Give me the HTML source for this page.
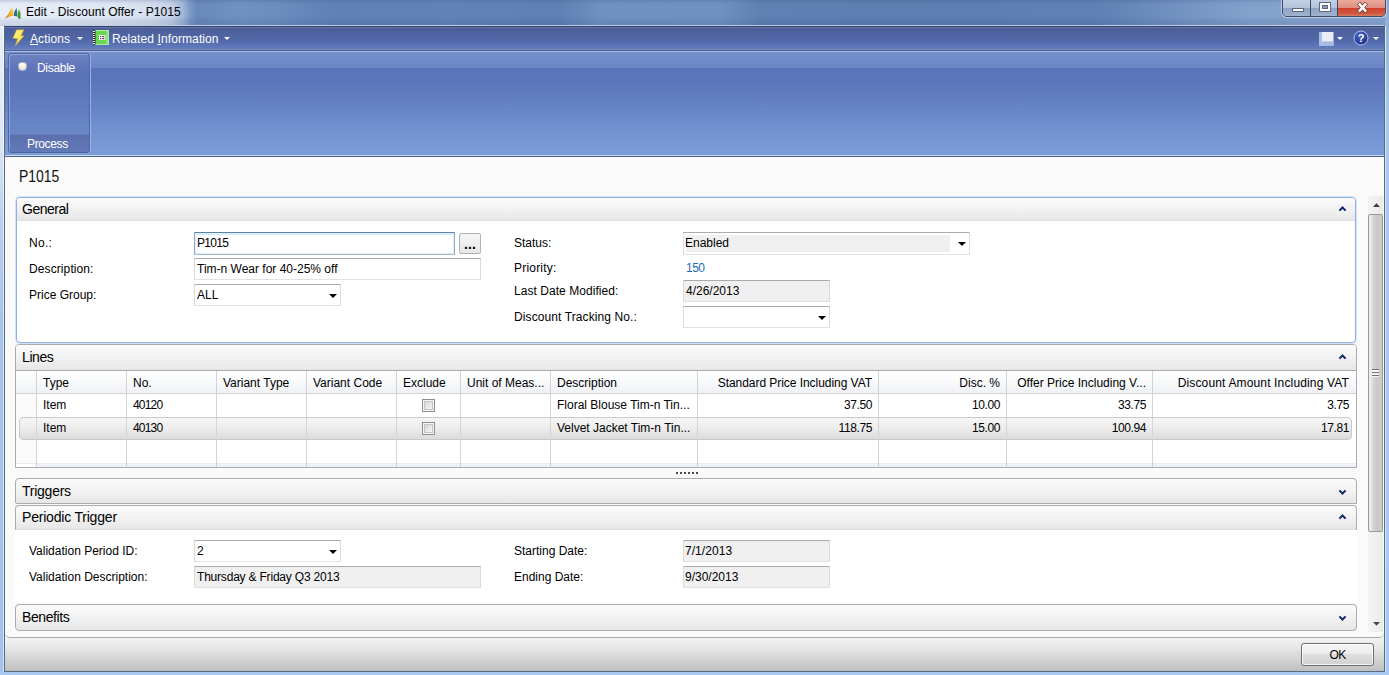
<!DOCTYPE html>
<html>
<head>
<meta charset="utf-8">
<title>Edit - Discount Offer - P1015</title>
<style>
html,body{margin:0;padding:0;}
body{width:1389px;height:675px;overflow:hidden;position:relative;background:#aecbee;font-family:"Liberation Sans",sans-serif;font-size:12px;color:#000;}
div,span{box-sizing:border-box;}
#win div,#win span,#win svg{position:absolute;}
.t{white-space:nowrap;line-height:14px;height:14px;}
/* title bar */
#titlebar{left:0;top:0;width:1389px;height:26px;background:linear-gradient(180deg,rgba(50,70,120,0.20) 0,rgba(50,70,120,0.04) 3px,rgba(50,70,120,0) 6px,rgba(50,70,120,0) 17px,rgba(50,70,130,0.10) 20px,rgba(40,60,110,0.14) 25px),linear-gradient(90deg,#e8eef8 0px,#e1e8f5 100px,#d5dfef 150px,#c3d0e7 172px,#a2b6d8 183px,#7c99c6 190px,#6989ba 197px,#6f91c1 240px,#6c8ebf 270px,#6385b8 310px,#5f81b4 340px,#6183b6 450px,#5e80b3 560px,#6f91c1 600px,#7092c2 720px,#5e80b2 760px,#5c7eb1 950px,#5f81b4 1100px,#7090c0 1170px,#84a1cd 1250px,#8aa7d2 1389px);}
#title{left:26px;top:5px;letter-spacing:0.05px;}
/* frame */
#frameL{left:0;top:26px;width:4px;height:649px;background:linear-gradient(180deg,#e9eff8 0,#dfe8f5 110px,#b7cfef 200px,#a6c4ec 300px,#a4c3ec 649px);}
#frameR{left:1385px;top:0px;width:4px;height:675px;background:linear-gradient(180deg,#8aa7d2 0,#9db8de 40px,#aac8f0 120px,#a9c9f3 675px);}
#frameB{left:0;top:672px;width:1389px;height:3px;background:#a9c9f2;}
#inner{left:4px;top:25px;width:1381px;height:647px;border:1px solid #566a84;border-top-color:#c3d0e6;}
/* menu */
#menubar{left:5px;top:26px;width:1379px;height:25px;background:linear-gradient(180deg,#2f3f6a 0,#2f3f6a 1px,#6877a6 1px,#6877a6 2px,#4a5d99 2px,#5167a5 12px,#4e66a6 13px,#627bbe 22.5px,#7987b6 23px,#7987b6 24px,#4e6094 24px,#4e6094 25px);}
#ribbon{left:5px;top:51px;width:1379px;height:104px;background:linear-gradient(180deg,#a3b8ec 0,#a3b8ec 1px,#7791cd 1px,#6b85c5 17px,#5973b8 17px,#5b76ba 30px,#6380c2 50px,#7090cf 75px,#7a9bd6 100px,#7a9cd5 104px);}
#ribbonline{left:5px;top:155px;width:1379px;height:2px;background:linear-gradient(180deg,#c4dcf8 0,#c4dcf8 1px,#4f6486 1px,#4f6486 2px);}
.w{color:#fff;}
/* content */
#content{left:5px;top:157px;width:1379px;height:481px;background:#fafafa;border-bottom:1px solid #a9a9a9;border-radius:0 0 5px 5px;}
#footerbg{left:5px;top:630px;width:1379px;height:41px;background:linear-gradient(180deg,#f2f2f2 0,#f1f1f1 9px,#e7e7e7 18px,#d2d2d2 30px,#c0c0c0 41px);}
.hdr{background:linear-gradient(180deg,#fbfbfb 0,#f3f3f3 45%,#e7e7e7 100%);}
.ht{font-size:14px;line-height:16px;height:16px;white-space:nowrap;left:6px;}
.inp{background:#fff;border:1px solid #dadada;border-top-color:#ababab;border-bottom-color:#e2e2e2;height:22px;}
.inp.ro{background:#f0f0f0;}
.inp .t{left:2px;top:3px;}
.lbl{white-space:nowrap;line-height:14px;height:14px;}
.arrow{width:0;height:0;border-left:4px solid transparent;border-right:4px solid transparent;border-top:4px solid #000;}
.vl{width:1px;background:#d4d4d4;}
.hl{height:1px;background:#d4d4d4;}
.cb{width:13px;height:13px;border:1px solid #8e8f8f;background:#f4f4f4;}
.cb div{left:1px;top:1px;width:9px;height:9px;border:1px solid #c5c5c5;background:linear-gradient(135deg,#d8d8d8,#f6f6f6);}
</style>
</head>
<body>
<div id="win">
<div id="titlebar"></div>
<span class="t" id="title">Edit - Discount Offer - P1015</span>
<div id="frameL"></div><div id="frameR"></div><div id="frameB"></div>
<div id="inner"></div><div style="left:1385px;top:26px;width:1px;height:646px;background:#d3e7fa"></div><div style="left:3px;top:26px;width:1px;height:646px;background:rgba(255,255,255,0.55)"></div>
<div id="menubar"></div>
<div id="ribbon"></div>
<div id="ribbonline"></div>
<div id="footerbg"></div>
<div id="content"></div>
<!--MENU-->
<svg id="appicon" style="left:0px;top:0px" width="28" height="26" viewBox="0 0 28 26">
<defs><linearGradient id="og" x1="0" y1="1" x2="0.8" y2="0"><stop offset="0" stop-color="#c25f18"/><stop offset="0.45" stop-color="#f1a81f"/><stop offset="1" stop-color="#f8d24a"/></linearGradient>
<linearGradient id="bg2" x1="0" y1="0" x2="0" y2="1"><stop offset="0" stop-color="#3a7fb8"/><stop offset="1" stop-color="#2b6b6a"/></linearGradient>
<linearGradient id="gg" x1="0" y1="0" x2="0" y2="1"><stop offset="0" stop-color="#7ccf5a"/><stop offset="0.4" stop-color="#3f9e2f"/><stop offset="1" stop-color="#2f8a25"/></linearGradient></defs>
<polygon points="4.8,18.4 8,14.5 11.6,7.4 13.2,10.5 13.2,15.6 9,16.8" fill="url(#og)"/>
<polygon points="13.6,15.8 14.4,11.5 16.5,7.7 17.1,11 17.1,16.6" fill="url(#bg2)"/>
<polygon points="17.6,17 17.9,12 19.2,9.2 20.4,12 20.5,18.9 18.5,18.4" fill="url(#gg)"/>
</svg>
<svg id="bolt" style="left:12px;top:29px" width="13" height="18" viewBox="0 0 13 18">
<defs><linearGradient id="yg" x1="0" y1="0" x2="1" y2="1"><stop offset="0" stop-color="#fff59a"/><stop offset="0.5" stop-color="#fbe661"/><stop offset="1" stop-color="#eec63a"/></linearGradient></defs>
<polygon points="4.6,0.8 12,0.8 9,6.4 11.9,6.9 3.2,17 5.6,9.8 0.9,9.3" fill="url(#yg)" stroke="#c9a228" stroke-width="0.5"/>
</svg>
<span class="t w" style="left:30px;top:32px;letter-spacing:0.1px"><u>A</u>ctions</span>
<div class="arrow" style="left:77px;top:37px;border-left-width:3.5px;border-right-width:3.5px;border-top:3.5px solid #fff;"></div>
<svg id="relicon" style="left:92px;top:29px" width="18" height="17" viewBox="0 0 18 17">
<rect x="3.5" y="1.5" width="13" height="14" fill="#68d650" stroke="#aeeaa4" stroke-width="1"/>
<rect x="14" y="2" width="2" height="13" fill="#8fe47c"/>
<rect x="1" y="1.5" width="2.6" height="14" fill="#1c241c"/>
<rect x="1" y="2" width="1.8" height="1" fill="#fff"/><rect x="1" y="4" width="1.8" height="1" fill="#fff"/><rect x="1" y="6" width="1.8" height="1" fill="#fff"/><rect x="1" y="8" width="1.8" height="1" fill="#fff"/><rect x="1" y="10" width="1.8" height="1" fill="#fff"/><rect x="1" y="12" width="1.8" height="1" fill="#fff"/><rect x="1" y="14" width="1.8" height="1" fill="#fff"/>
<rect x="7" y="6" width="6.4" height="5" fill="#fff"/>
<rect x="8" y="7" width="1.2" height="1.2" fill="#5a3a6a"/><rect x="10.2" y="7" width="2.2" height="1.2" fill="#7a2a6a"/>
<rect x="8" y="9" width="1.2" height="1.2" fill="#5a3a6a"/><rect x="10.2" y="9" width="2.2" height="1.2" fill="#7a2a6a"/>
</svg>
<span class="t w" style="left:112px;top:32px;letter-spacing:0.1px">Related <u>I</u>nformation</span>
<div class="arrow" style="left:224px;top:37px;border-left-width:3.5px;border-right-width:3.5px;border-top:3.5px solid #fff;"></div>
<!-- right icons -->
<svg style="left:1318px;top:31px" width="17" height="16" viewBox="0 0 17 16">
<rect x="1" y="1" width="14.5" height="13.5" fill="#e9eef7"/>
<rect x="1" y="1" width="2.8" height="13.5" fill="#a6bde6"/>
<rect x="3.8" y="11" width="11.7" height="3.5" fill="#a6bde6"/>
<rect x="3.8" y="10.6" width="11.7" height="0.8" fill="#8ea8d8"/>
</svg>
<div class="arrow" style="left:1337px;top:37px;border-left-width:3px;border-right-width:3px;border-top:3px solid #fff;"></div>
<svg style="left:1353px;top:30px" width="16" height="16" viewBox="0 0 16 16">
<defs><radialGradient id="hg" cx="0.4" cy="0.3" r="0.8"><stop offset="0" stop-color="#4a63c8"/><stop offset="1" stop-color="#1a2a8a"/></radialGradient></defs>
<circle cx="8" cy="8" r="7" fill="url(#hg)" stroke="#b8c6ea" stroke-width="1"/>
<text x="8" y="12" font-family="Liberation Sans, sans-serif" font-weight="bold" font-size="11" fill="#fff" text-anchor="middle">?</text>
</svg>
<div class="arrow" style="left:1373px;top:37px;border-left-width:3px;border-right-width:3px;border-top:3px solid #fff;"></div>
<!-- window buttons -->
<div id="wbtns" style="left:1282px;top:-1px;width:104px;height:18px;border:1px solid #3d4b66;border-radius:0 0 5px 5px;overflow:hidden;box-shadow:0 0 0 1px rgba(255,255,255,0.45);">
  <div style="left:0;top:0;width:28px;height:17px;background:linear-gradient(180deg,#c4d0e3 0,#b4c3da 45%,#8ea3c4 50%,#a3b6d2 100%);border-right:1px solid #3d4b66;"></div>
  <div style="left:28px;top:0;width:27px;height:17px;background:linear-gradient(180deg,#c4d0e3 0,#b4c3da 45%,#8ea3c4 50%,#a3b6d2 100%);border-right:1px solid #3d4b66;"></div>
  <div style="left:55px;top:0;width:48px;height:17px;background:linear-gradient(180deg,#e9a99c 0,#e08f80 45%,#d1412a 50%,#cf5a44 80%,#d88a70 100%);"></div>
  <div style="left:9px;top:8px;width:12px;height:4px;background:#fff;border:1px solid #5a6880;"></div>
  <div style="left:36px;top:2px;width:12px;height:10px;background:#fff;border:1px solid #5a6880;"></div>
  <div style="left:39px;top:5px;width:6px;height:4px;background:#8d9ab3;border:1px solid #5a6880;"></div>
  <svg style="left:73px;top:2px" width="13" height="11" viewBox="0 0 13 11"><g stroke-linecap="butt"><line x1="2.6" y1="1" x2="10.4" y2="10" stroke="#5a3030" stroke-width="4"/><line x1="10.4" y1="1" x2="2.6" y2="10" stroke="#5a3030" stroke-width="4"/><line x1="2.9" y1="1.4" x2="10.1" y2="9.6" stroke="#fff" stroke-width="2.6"/><line x1="10.1" y1="1.4" x2="2.9" y2="9.6" stroke="#fff" stroke-width="2.6"/></g></svg>
</div>

<!--RIBBON-->
<div id="grp" style="left:8px;top:53px;width:82px;height:100px;border:1px solid #50679d;border-radius:3px;box-shadow:inset 1px 1px 0 #8ea4e0, 1px 0 0 #9db2ea;background:linear-gradient(180deg,#6d83c1 0,#6379bc 10px,#5b73b7 22px,#5d78bb 40px,#6a88c8 80px,#5d70ae 81px,#5e73b1 88px,#657cba 99px);"></div>
<div style="left:18px;top:62px;width:9px;height:9px;border-radius:3px 3px 4px 4px;background:linear-gradient(180deg,#ffffff 0,#f6f0dc 55%,#e4e0e8 100%);border:1px solid #a9aecd;"></div>
<span class="t w" style="left:37px;top:61px;letter-spacing:-0.3px">Disable</span>
<span class="t w" style="left:27px;top:137px;letter-spacing:-0.35px">Process</span>

<!--CONTENT-->
<span style="left:19px;top:168px;font-size:16px;line-height:18px;height:18px;transform-origin:0 0;transform:scaleX(0.87);white-space:nowrap;color:#111">P1015</span>
<div style="left:16px;top:197px;width:1340px;height:146px;border:1px solid #8db0ea;border-radius:4px;background:#fff;box-shadow:0 0 0 1px rgba(170,198,242,0.45);"></div>
<div class="hdr" style="left:17px;top:198px;width:1338px;height:23px;border-radius:3px 3px 0 0;border-bottom:1px solid #e2e2e2;"></div>
<span class="ht" style="left:22px;top:201px;letter-spacing:-0.5px">General</span>
<svg style="left:1338px;top:205px" width="9" height="8" viewBox="0 0 9 8"><polyline points="1.4,5.6 4.5,2.5 7.6,5.6" fill="none" stroke="#10296c" stroke-width="2"/></svg>
<span class="lbl" style="left:29px;top:236px;letter-spacing:0.3px">No.:</span>
<div class="inp" style="left:194px;top:232px;width:261px;height:23px;border:1px solid #8fa8c6;border-top-color:#5f82aa;border-bottom-color:#a9bacb;border-radius:1px;box-shadow:inset 0 0 0 1px #e0f0fb, inset 0 2px 1px #d4e9f8;"><span class="t" style="letter-spacing:-0.7px">P1015</span></div>
<div style="left:459px;top:233px;width:22px;height:21px;border:1px solid #b2b2b2;border-radius:2px;background:linear-gradient(180deg,#f5f5f5 0,#efefef 50%,#e6e6e6 100%);"><span style="left:0;top:3px;width:20px;text-align:center;line-height:14px;font-weight:bold;font-size:14px;letter-spacing:0.1px">...</span></div>
<span class="lbl" style="left:29px;top:262px;letter-spacing:0.1px">Description:</span>
<div class="inp" style="left:194px;top:258px;width:287px;"><span class="t" style="">Tim-n Wear for 40-25% off</span></div>
<span class="lbl" style="left:29px;top:288px;">Price Group:</span>
<div class="inp" style="left:194px;top:284px;width:147px;"><span class="t" style="">ALL</span><div class="arrow" style="left:134px;top:9px"></div></div>
<span class="lbl" style="left:514px;top:236px;">Status:</span>
<div class="inp" style="left:683px;top:232px;width:287px;height:23px;"><div class="arrow" style="left:274px;top:9px"></div></div>
<div style="left:686px;top:235px;width:264px;height:17px;background:#f0f0f0;"></div>
<span class="lbl" style="left:685px;top:236px;">Enabled</span>
<span class="lbl" style="left:514px;top:261px;letter-spacing:0.2px">Priority:</span>
<span class="lbl" style="left:686px;top:261px;color:#1c6cb8;letter-spacing:-0.5px">150</span>
<span class="lbl" style="left:514px;top:284px;letter-spacing:0.05px">Last Date Modified:</span>
<div class="inp ro" style="left:683px;top:280px;width:147px;"><span class="t" style="">4/26/2013</span></div>
<span class="lbl" style="left:514px;top:310px;letter-spacing:0.1px">Discount Tracking No.:</span>
<div class="inp" style="left:683px;top:306px;width:147px;"><div class="arrow" style="left:134px;top:9px"></div></div>
<!--LINES-->
<div style="left:15px;top:344px;width:1342px;height:124px;border:1px solid #ababab;border-radius:4px 4px 0 0;background:#fff;"></div>
<div class="hdr" style="left:16px;top:345px;width:1340px;height:25px;border-radius:3px 3px 0 0;"></div>
<span class="ht" style="left:22px;top:349px;letter-spacing:-0.4px">Lines</span>
<svg style="left:1338px;top:353px" width="9" height="8" viewBox="0 0 9 8"><polyline points="1.4,5.6 4.5,2.5 7.6,5.6" fill="none" stroke="#10296c" stroke-width="2"/></svg>
<div class="hl" style="left:16px;top:370px;width:1340px;background:#a9a9a9"></div>
<div style="left:16px;top:371px;width:1340px;height:22px;background:linear-gradient(180deg,#ffffff 0,#f9fafb 45%,#eff1f5 100%);"></div>
<div style="left:16px;top:394px;width:20px;height:69px;background:#fbfbfb;"></div>
<div class="hl" style="left:16px;top:393px;width:1340px;"></div>

<div class="hl" style="left:16px;top:463px;width:1340px;background:#ececec"></div>
<div style="left:37px;top:464px;width:1319px;height:3px;background:#eef3fb;"></div>
<div style="left:19px;top:417px;width:1333px;height:23px;border:1px solid #c9c9c9;border-radius:4px;background:linear-gradient(180deg,#f6f6f6 0,#ececec 50%,#dcdcdc 100%);"></div>
<div class="vl" style="left:36px;top:371px;height:96px;"></div>
<div class="vl" style="left:126px;top:371px;height:96px;"></div>
<div class="vl" style="left:216px;top:371px;height:96px;"></div>
<div class="vl" style="left:306px;top:371px;height:96px;"></div>
<div class="vl" style="left:396px;top:371px;height:96px;"></div>
<div class="vl" style="left:460px;top:371px;height:96px;"></div>
<div class="vl" style="left:550px;top:371px;height:96px;"></div>
<div class="vl" style="left:697px;top:371px;height:96px;"></div>
<div class="vl" style="left:878px;top:371px;height:96px;"></div>
<div class="vl" style="left:1006px;top:371px;height:96px;"></div>
<div class="vl" style="left:1152px;top:371px;height:96px;"></div>
<span class="lbl" style="left:43px;top:376px;">Type</span>
<span class="lbl" style="left:133px;top:376px;">No.</span>
<span class="lbl" style="left:223px;top:376px;">Variant Type</span>
<span class="lbl" style="left:313px;top:376px;">Variant Code</span>
<span class="lbl" style="left:403px;top:376px;">Exclude</span>
<span class="lbl" style="left:467px;top:376px;">Unit of Meas...</span>
<span class="lbl" style="left:557px;top:376px;">Description</span>
<span class="lbl" style="right:517px;top:376px;letter-spacing:-0.05px">Standard Price Including VAT</span>
<span class="lbl" style="right:389px;top:376px;">Disc. %</span>
<span class="lbl" style="right:243px;top:376px;">Offer Price Including V...</span>
<span class="lbl" style="right:40px;top:376px;letter-spacing:0.15px">Discount Amount Including VAT</span>
<span class="lbl" style="left:43px;top:398px;">Item</span>
<span class="lbl" style="left:133px;top:398px;letter-spacing:-0.8px">40120</span>
<span class="lbl" style="left:557px;top:398px;">Floral Blouse Tim-n Tin...</span>
<span class="lbl" style="right:517px;top:398px;letter-spacing:-0.4px">37.50</span>
<span class="lbl" style="right:389px;top:398px;letter-spacing:-0.4px">10.00</span>
<span class="lbl" style="right:243px;top:398px;letter-spacing:-0.4px">33.75</span>
<span class="lbl" style="right:40px;top:398px;letter-spacing:-0.4px">3.75</span>
<span class="lbl" style="left:43px;top:421px;">Item</span>
<span class="lbl" style="left:133px;top:421px;letter-spacing:-0.8px">40130</span>
<span class="lbl" style="left:557px;top:421px;">Velvet Jacket Tim-n Tin...</span>
<span class="lbl" style="right:517px;top:421px;letter-spacing:-0.4px">118.75</span>
<span class="lbl" style="right:389px;top:421px;letter-spacing:-0.4px">15.00</span>
<span class="lbl" style="right:243px;top:421px;letter-spacing:-0.4px">100.94</span>
<span class="lbl" style="right:40px;top:421px;letter-spacing:-0.4px">17.81</span>
<div class="cb" style="left:422px;top:399px"><div></div></div>
<div class="cb" style="left:422px;top:422px"><div></div></div>
<div style="left:676px;top:472px;width:22px;height:2px;background:repeating-linear-gradient(90deg,#4c4c4c 0,#4c4c4c 2px,transparent 2px,transparent 4px);"></div>
<!--TRIG-->
<div class="hdr" style="left:15px;top:478px;width:1342px;height:26px;border:1px solid #ababab;border-radius:4px 4px 0 2px;"></div>
<span class="ht" style="left:22px;top:483px;letter-spacing:-0.25px">Triggers</span>
<svg style="left:1338px;top:488px" width="9" height="8" viewBox="0 0 9 8"><polyline points="1.4,2.4 4.5,5.5 7.6,2.4" fill="none" stroke="#10296c" stroke-width="2"/></svg>
<div style="left:15px;top:529px;width:1342px;height:74px;background:#fff;"></div>
<div class="hdr" style="left:15px;top:505px;width:1342px;height:25px;border:1px solid #ababab;border-bottom-color:#dcdcdc;border-radius:4px 4px 0 0;"></div>
<span class="ht" style="left:22px;top:509px;letter-spacing:-0.2px">Periodic Trigger</span>
<svg style="left:1338px;top:513px" width="9" height="8" viewBox="0 0 9 8"><polyline points="1.4,5.6 4.5,2.5 7.6,5.6" fill="none" stroke="#10296c" stroke-width="2"/></svg>
<span class="lbl" style="left:29px;top:544px;">Validation Period ID:</span>
<div class="inp" style="left:194px;top:540px;width:147px;"><span class="t" style="">2</span><div class="arrow" style="left:134px;top:9px"></div></div>
<span class="lbl" style="left:29px;top:570px;">Validation Description:</span>
<div class="inp ro" style="left:194px;top:566px;width:287px;"><span class="t" style="letter-spacing:-0.2px">Thursday &amp; Friday Q3 2013</span></div>
<span class="lbl" style="left:514px;top:544px;">Starting Date:</span>
<div class="inp ro" style="left:683px;top:540px;width:147px;"><span class="t" style="left:1px;letter-spacing:0.05px">7/1/2013</span></div>
<span class="lbl" style="left:514px;top:570px;">Ending Date:</span>
<div class="inp ro" style="left:683px;top:566px;width:147px;"><span class="t" style="left:1px;">9/30/2013</span></div>
<div class="hdr" style="left:15px;top:604px;width:1342px;height:27px;border:1px solid #ababab;border-radius:4px;"></div>
<span class="ht" style="left:22px;top:609px;letter-spacing:-0.4px">Benefits</span>
<svg style="left:1338px;top:614px" width="9" height="8" viewBox="0 0 9 8"><polyline points="1.4,2.4 4.5,5.5 7.6,2.4" fill="none" stroke="#10296c" stroke-width="2"/></svg>
<div style="left:1368px;top:196px;width:15px;height:436px;background:linear-gradient(90deg,#f4f4f4,#eaeaea);"></div>
<div style="left:1368px;top:214px;width:15px;height:318px;border:1px solid #989898;border-radius:2px;background:linear-gradient(90deg,#f2f2f2 0,#e8e8eb 15%,#d6d6db 32%,#cac7c8 60%,#cfcccc 100%);"></div>
<div style="left:1372px;top:369px;width:7px;height:8px;background:repeating-linear-gradient(180deg,#707070 0,#707070 1px,#f6f6f6 1px,#f6f6f6 3px);"></div>
<svg style="left:1372px;top:202px" width="9" height="6" viewBox="0 0 9 6"><polygon points="1,5 4.5,1.2 8,5" fill="#3c3c3c"/></svg>
<svg style="left:1372px;top:621px" width="9" height="6" viewBox="0 0 9 6"><polygon points="1,1 4.5,4.8 8,1" fill="#484848"/></svg>
<div style="left:1301px;top:643px;width:73px;height:23px;border:1px solid #707070;border-radius:3px;background:linear-gradient(180deg,#f4f4f4 0,#ededed 45%,#dedede 50%,#d2d2d2 100%);box-shadow:inset 0 0 0 1px rgba(255,255,255,0.7);"><span style="left:0;top:4px;width:71px;text-align:center;line-height:14px;font-size:12px;letter-spacing:-0.6px">OK</span></div>
</div>
</body>
</html>
